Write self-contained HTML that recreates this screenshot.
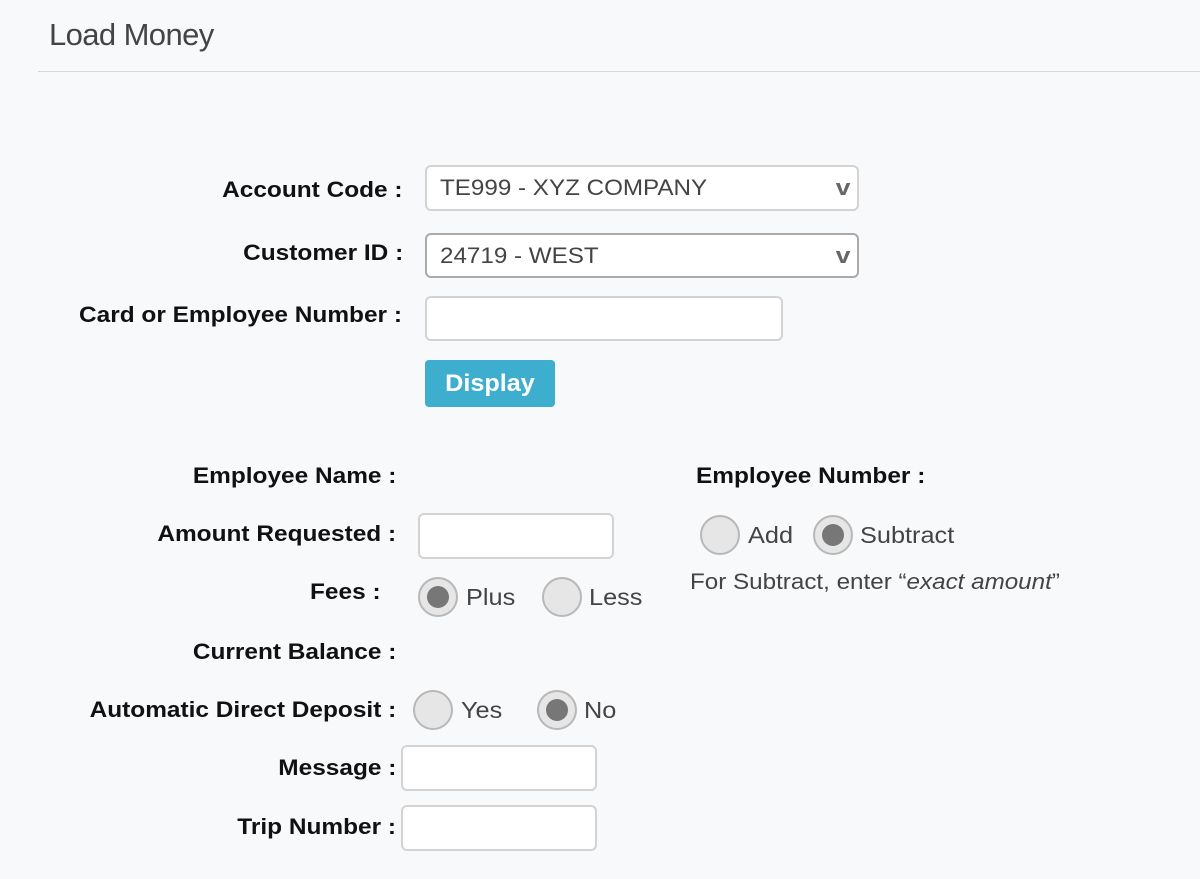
<!DOCTYPE html>
<html><head><style>
html,body{margin:0;padding:0;}
body{width:1200px;height:879px;background:#f8f9fb;position:relative;overflow:hidden;font-family:"Liberation Sans",Arial,sans-serif;}
h1{position:absolute;left:49px;top:17px;margin:0;font-weight:normal;font-size:31px;color:#444;letter-spacing:-0.6px;}
.hr{position:absolute;left:38px;top:71px;width:1162px;height:1px;background:#d5d7da;}
.lbl{position:absolute;font-weight:bold;font-size:22px;color:#111;text-align:right;white-space:nowrap;transform:scaleX(1.11);transform-origin:right center;}
.lbl.l{transform-origin:left center;}
.box{position:absolute;background:#fff;border:2px solid #d3d3d3;border-radius:6px;box-sizing:border-box;}
.sel{font-size:22px;color:#444;line-height:42px;}
.sel b{position:absolute;left:13px;top:0;font-weight:normal;transform:scaleX(1.1);transform-origin:left center;white-space:nowrap;}
.sel span{position:absolute;right:8px;top:0;font-weight:bold;color:#666;font-size:22px;transform:scaleX(1.2);}
.btn{position:absolute;left:425px;top:360px;width:130px;height:47px;background:#3daecd;border-radius:4px;color:#fff;font-weight:bold;font-size:24px;text-align:center;line-height:47px;}
.r{position:absolute;width:40px;height:40px;border-radius:50%;background:#e6e6e6;border:2px solid #b8b8b8;box-sizing:border-box;}
.r.on::after{content:"";position:absolute;left:7px;top:7px;width:22px;height:22px;border-radius:50%;background:#777;}
.t{position:absolute;font-size:23px;color:#444;white-space:nowrap;transform:scaleX(1.1);transform-origin:left center;}
</style></head><body>
<h1>Load Money</h1>
<div class="hr"></div>

<div class="lbl" style="right:797px;top:177px">Account Code :</div>
<div class="box sel" style="left:425px;top:165px;width:434px;height:46px"><b>TE999 - XYZ COMPANY</b><span>v</span></div>
<div class="lbl" style="right:797px;top:240px">Customer ID :</div>
<div class="box sel" style="left:425px;top:233px;width:434px;height:45px;border-color:#aaa"><b>24719 - WEST</b><span>v</span></div>
<div class="lbl" style="right:798px;top:302px">Card or Employee Number :</div>
<div class="box" style="left:425px;top:296px;width:358px;height:45px"></div>
<div class="btn"><div style="transform:scaleX(1.05)">Display</div></div>

<div class="lbl" style="right:804px;top:463px">Employee Name :</div>
<div class="lbl l" style="left:696px;top:463px">Employee Number :</div>
<div class="lbl" style="right:804px;top:521px">Amount Requested :</div>
<div class="box" style="left:418px;top:513px;width:196px;height:46px"></div>
<div class="r" style="left:700px;top:515px"></div><div class="t" style="left:748px;top:522px">Add</div>
<div class="r on" style="left:813px;top:515px"></div><div class="t" style="left:860px;top:522px">Subtract</div>
<div class="t" style="left:690px;top:569px;font-size:22px">For Subtract, enter “<i>exact amount</i>”</div>

<div class="lbl" style="right:819px;top:579px">Fees :</div>
<div class="r on" style="left:418px;top:577px"></div><div class="t" style="left:466px;top:584px">Plus</div>
<div class="r" style="left:542px;top:577px"></div><div class="t" style="left:589px;top:584px">Less</div>

<div class="lbl" style="right:804px;top:639px">Current Balance :</div>
<div class="lbl" style="right:804px;top:697px">Automatic Direct Deposit :</div>
<div class="r" style="left:413px;top:690px"></div><div class="t" style="left:461px;top:697px">Yes</div>
<div class="r on" style="left:537px;top:690px"></div><div class="t" style="left:584px;top:697px">No</div>

<div class="lbl" style="right:804px;top:755px">Message :</div>
<div class="box" style="left:401px;top:745px;width:196px;height:46px"></div>
<div class="lbl" style="right:804px;top:814px">Trip Number :</div>
<div class="box" style="left:401px;top:805px;width:196px;height:46px"></div>
</body></html>
